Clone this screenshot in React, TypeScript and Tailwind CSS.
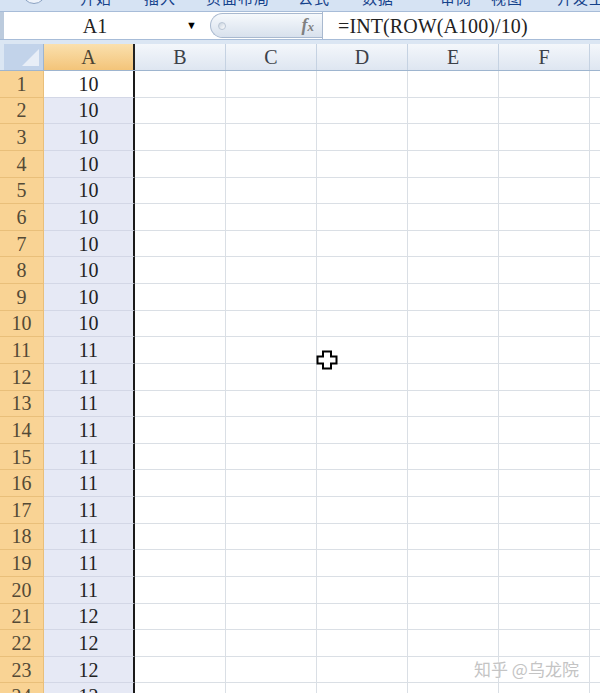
import React from 'react';

const ROWS = Array.from({ length: 24 }, (_, i) => i + 1);
const COLS = ['B', 'C', 'D', 'E', 'F'];
const TABS: [string, string][] = [
  ['开始', 'ml-[80px]'],
  ['插入', 'ml-[32px]'],
  ['页面布局', 'ml-[30px]'],
  ['公式', 'ml-[28px]'],
  ['数据', 'ml-[32px]'],
  ['审阅', 'ml-[46px]'],
  ['视图', 'ml-[19px]'],
  ['开发工具', 'ml-[34px]'],
];

const serif = "font-['Liberation_Serif','Noto_Sans_CJK_SC',serif]";

function value(r: number) {
  return r <= 10 ? 10 : r <= 20 ? 11 : 12;
}

function Cursor() {
  return (
    <svg width="22" height="20" viewBox="0 0 22 20" className="absolute left-[316px] top-[350px]">
      <path d="M7 1.5h8v5h5.5v7H15v5H7v-5H1.5v-7H7z" fill="#fff" stroke="#000" strokeWidth="2" strokeLinejoin="miter" />
    </svg>
  );
}

export default function App() {
  return (
    <div className="relative h-[693px] w-[600px] overflow-hidden bg-white">
      {/* ribbon tabs, cut off at the top */}
      <div className="flex h-[11px] overflow-hidden bg-[#d6e3f3]">
        <div className="absolute left-[22px] top-[-20px] h-[24px] w-[24px] rounded-full border border-[#8aa2c2] bg-[#eef3fa]" />
        {TABS.map(([t, ml]) => (
          <span key={t} className={`${ml} -mt-[10px] shrink-0 font-['Noto_Sans_CJK_SC',sans-serif] text-[15px] leading-[15px] tracking-[1px] text-[#15428b]`}>{t}</span>
        ))}
      </div>

      {/* formula bar */}
      <div className="flex h-[29px] border-y border-[#a7bcd8] bg-white">
        <div className="w-[4px] bg-[#bccbdd]" />
        <div className="relative flex w-[206px] items-center">
          <span className={`${serif} w-[182px] text-center text-[20px] text-[#222]`}>A1</span>
          <span className="text-[11px] text-black">▼</span>
        </div>
        <div className="my-[1px] flex w-[112px] items-center rounded-l-full border border-r-0 border-[#a9b9cf] bg-gradient-to-b from-[#f6f9fc] to-[#d8e1ed]">
          <span className="ml-[7px] h-[8px] w-[8px] rounded-full border border-[#b9c5d4] bg-gradient-to-br from-[#c8d2de] to-white" />
          <span className={`${serif} ml-auto mr-[8px] text-[18px] font-bold italic text-[#808080]`}>
            f<span className="text-[13px]">x</span>
          </span>
        </div>
        <div className="w-px bg-[#a9b9cf]" />
        <div className="flex flex-1 items-center pl-[15px]">
          <span className={`${serif} text-[20px] tracking-[0.1px] text-[#222]`}>=INT(ROW(A100)/10)</span>
        </div>
      </div>

      <div className="h-[4px] bg-[#dbe6f3]" />

      {/* column headers */}
      <div className="flex h-[27px] border-b border-[#9eb5cf]">
        <div className="w-[4px] bg-[#dbe6f3]" />
        <div className="relative w-[40px] border-r border-[#9eb5cf] bg-[#c2d3ea]">
          <svg width="20" height="20" viewBox="0 0 20 20" className="absolute bottom-[3px] right-[3px]">
            <path d="M19 2v17H2z" fill="#e8eef7" />
          </svg>
        </div>
        <div className={`${serif} flex w-[91px] items-center justify-center border-r-2 border-[#222] bg-gradient-to-b from-[#fae0ad] to-[#f3c479] text-[20px] text-[#4a4333]`}>A</div>
        {COLS.map((c) => (
          <div key={c} className={`${serif} flex w-[91px] items-center justify-center border-r border-[#c5d2e2] bg-gradient-to-b from-[#f4f7fb] to-[#dee6f1] text-[20px] text-[#3c4148]`}>{c}</div>
        ))}
        <div className="flex-1 bg-gradient-to-b from-[#f4f7fb] to-[#dee6f1]" />
      </div>

      {/* grid */}
      <div className={serif}>
        {ROWS.map((r) => (
          <div key={r} className="flex h-[26.64px]">
            <div className="flex w-[44px] items-center justify-center border-b border-r border-[#e9bf7a] bg-[#f9d394] text-[20px] text-[#544a36]">{r}</div>
            <div className={`flex w-[91px] items-center justify-center border-b border-r-2 border-b-[#d3d7e6] border-r-[#1a1a1a] text-[20px] text-[#222] ${r === 1 ? 'bg-white' : 'bg-[#e6e9f5]'}`}>{value(r)}</div>
            {COLS.map((c) => (
              <div key={c} className="w-[91px] border-b border-r border-[#dadfe5]" />
            ))}
            <div className="flex-1 border-b border-[#dadfe5]" />
          </div>
        ))}
      </div>

      <Cursor />

      <div className="absolute left-[474px] top-[656px] font-['Noto_Sans_CJK_SC',sans-serif] text-[17px] text-[#c4c4c4] [text-shadow:0_0_2px_#fff]">知乎 @乌龙院</div>
    </div>
  );
}
